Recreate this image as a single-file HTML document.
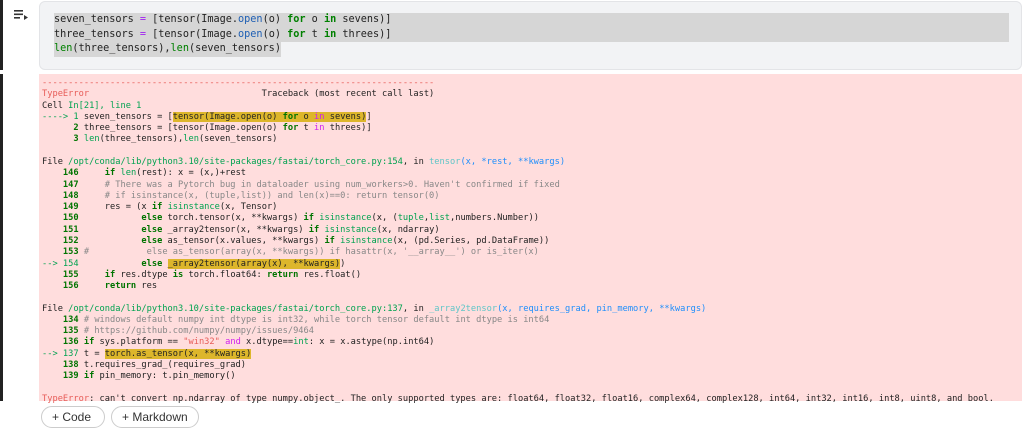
<!DOCTYPE html>
<html><head><meta charset="utf-8"><style>
*{margin:0;padding:0;box-sizing:border-box}
body{width:1024px;height:420px;background:#fff;position:relative;overflow:hidden;font-family:"DejaVu Sans Mono","Liberation Mono",monospace}
.bar{position:absolute;left:0;width:3px;background:#222}
.cell{position:absolute;left:39px;top:1px;width:983px;height:69px;background:#f2f3f5;border:1px solid #e3e4e7;border-radius:6px}
.code{position:absolute;left:54px;top:13px;font-size:10.2px;line-height:14.7px;color:#222;white-space:pre}
.code span.l{background:#d6d6d6;display:inline-block}
.kw{color:#008000;font-weight:bold}.op{color:#a020f0}.fn{color:#1e5fb4}.bi{color:#008000}
.out{position:absolute;left:39px;top:74px;width:983px;height:327px;background:#ffdddd}
.tb{position:absolute;left:42px;top:78px;font-size:8.7px;line-height:11.28px;color:#222;white-space:pre}
.r{color:#e75c58}.g{color:#00a250}.gb{color:#007400;font-weight:bold}.c{color:#888}.b{color:#208ffb}.cy{color:#60c6c8}.h{background:#ddb62b}.m{color:#d020f0}
.btn{position:absolute;top:406px;height:22px;border:1px solid #ccc;border-radius:11px;background:#fff;font-family:"Liberation Sans",sans-serif;font-size:12px;color:#333;padding:3px 10px}
</style></head><body>
<div class="bar" style="top:0;height:70px"></div>
<div class="bar" style="top:74px;height:327px"></div>
<svg style="position:absolute;left:13px;top:9px" width="16" height="12" viewBox="0 0 16 12"><rect x="1" y="1" width="9" height="1.6" fill="#333"/><rect x="1" y="4.5" width="9" height="1.6" fill="#333"/><rect x="1" y="8" width="6" height="1.6" fill="#333"/><path d="M11 6 L15 8.5 L11 11Z" fill="#333"/></svg>
<div class="cell"></div>
<div class="code"><span class="l" style="width:955px">seven_tensors <span class="op">=</span> [tensor(Image.<span class="fn">open</span>(o) <span class="kw">for</span> o <span class="kw">in</span> sevens)]</span>
<span class="l" style="width:955px">three_tensors <span class="op">=</span> [tensor(Image.<span class="fn">open</span>(o) <span class="kw">for</span> t <span class="kw">in</span> threes)]</span>
<span class="l"><span class="bi">len</span>(three_tensors),<span class="bi">len</span>(seven_tensors)</span></div>
<div class="out"></div>
<div class="tb"><span class="r">---------------------------------------------------------------------------</span>
<span class="r">TypeError</span>                                 Traceback (most recent call last)
Cell <span class="g">In[21], line 1</span>
<span class="g">----&gt; 1</span> seven_tensors = [<span class="h">tensor(Image.open(o) <span class="gb">for</span> o <span class="m">in</span> sevens)</span>]
<span class="gb">      2</span> three_tensors = [tensor(Image.open(o) <span class="gb">for</span> t <span class="m">in</span> threes)]
<span class="gb">      3</span> <span class="g">len</span>(three_tensors),<span class="g">len</span>(seven_tensors)

File <span class="g">/opt/conda/lib/python3.10/site-packages/fastai/torch_core.py:154</span>, in <span class="cy">tensor</span><span class="b">(x, *rest, **kwargs)</span>
<span class="gb">    146</span>     <span class="gb">if</span> <span class="g">len</span>(rest): x = (x,)+rest
<span class="gb">    147</span>     <span class="c"># There was a Pytorch bug in dataloader using num_workers&gt;0. Haven't confirmed if fixed</span>
<span class="gb">    148</span>     <span class="c"># if isinstance(x, (tuple,list)) and len(x)==0: return tensor(0)</span>
<span class="gb">    149</span>     res = (x <span class="gb">if</span> <span class="g">isinstance</span>(x, Tensor)
<span class="gb">    150</span>            <span class="gb">else</span> torch.tensor(x, **kwargs) <span class="gb">if</span> <span class="g">isinstance</span>(x, (<span class="g">tuple</span>,<span class="g">list</span>,numbers.Number))
<span class="gb">    151</span>            <span class="gb">else</span> _array2tensor(x, **kwargs) <span class="gb">if</span> <span class="g">isinstance</span>(x, ndarray)
<span class="gb">    152</span>            <span class="gb">else</span> as_tensor(x.values, **kwargs) <span class="gb">if</span> <span class="g">isinstance</span>(x, (pd.Series, pd.DataFrame))
<span class="gb">    153</span> <span class="c">#           else as_tensor(array(x, **kwargs)) if hasattr(x, '__array__') or is_iter(x)</span>
<span class="g">--&gt; 154</span>            <span class="gb">else</span> <span class="h">_array2tensor(array(x), **kwargs)</span>)
<span class="gb">    155</span>     <span class="gb">if</span> res.dtype <span class="gb">is</span> torch.float64: <span class="gb">return</span> res.float()
<span class="gb">    156</span>     <span class="gb">return</span> res

File <span class="g">/opt/conda/lib/python3.10/site-packages/fastai/torch_core.py:137</span>, in <span class="cy">_array2tensor</span><span class="b">(x, requires_grad, pin_memory, **kwargs)</span>
<span class="gb">    134</span> <span class="c"># windows default numpy int dtype is int32, while torch tensor default int dtype is int64</span>
<span class="gb">    135</span> <span class="c"># https://github.com/numpy/numpy/issues/9464</span>
<span class="gb">    136</span> <span class="gb">if</span> sys.platform == <span class="r">"win32"</span> <span class="m">and</span> x.dtype==<span class="g">int</span>: x = x.astype(np.int64)
<span class="g">--&gt; 137</span> t = <span class="h">torch.as_tensor(x, **kwargs)</span>
<span class="gb">    138</span> t.requires_grad_(requires_grad)
<span class="gb">    139</span> <span class="gb">if</span> pin_memory: t.pin_memory()

<span class="r">TypeError</span>: can't convert np.ndarray of type numpy.object_. The only supported types are: float64, float32, float16, complex64, complex128, int64, int32, int16, int8, uint8, and bool.</div>
<div class="btn" style="left:41px;width:64px">+ Code</div>
<div class="btn" style="left:111px;width:88px">+ Markdown</div>
</body></html>
